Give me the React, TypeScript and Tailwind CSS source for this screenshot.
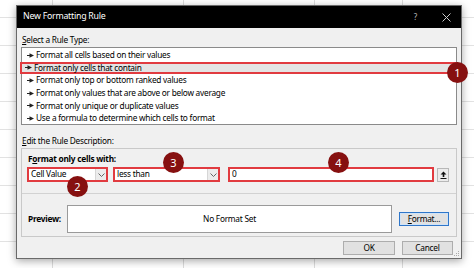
import type { ReactNode } from "react";

const ruleTypes = [
    "Format all cells based on their values",
    "Format only cells that contain",
    "Format only top or bottom ranked values",
    "Format only values that are above or below average",
    "Format only unique or duplicate values",
    "Use a formula to determine which cells to format",
];

const cols = [52, 183, 314, 402];
const rows = [17, 45, 73, 101, 129, 157, 185, 213, 241];

// Sheet grid behind the dialog
function SheetGrid() {
    return (
        <svg className="absolute inset-0" width={474} height={268}>
            {cols.map((x) => (
                <line key={x} x1={x + 0.5} y1={0} x2={x + 0.5} y2={268} stroke="#dcdcdc" />
            ))}
            {rows.map((y) => (
                <line key={y} x1={0} y1={y + 0.5} x2={474} y2={y + 0.5} stroke="#e2e2e2" />
            ))}
        </svg>
    );
}

function Badge({ n, className }: { n: number; className: string }) {
    return (
        <div
            className={`absolute w-[21px] h-[21px] rounded-full bg-[#861010] text-white text-[11px] tracking-normal flex items-center justify-center leading-none ${className}`}
        >
            {n}
        </div>
    );
}

function Chevron() {
    return (
        <svg width="7" height="4" viewBox="0 0 7 4">
            <polyline points="0.5,0.5 3.5,3.5 6.5,0.5" fill="none" stroke="#666" strokeWidth="1" />
        </svg>
    );
}

// little "stem + triangle" marker in front of each rule type
function RuleArrow() {
    return (
        <svg width="7" height="5" viewBox="0 0 7 5" className="mr-[2px] shrink-0">
            <line x1="0" y1="2.5" x2="3" y2="2.5" stroke="#222" strokeWidth="1" />
            <path d="M2.5 0.3 L7 2.5 L2.5 4.7 Z" fill="#222" />
        </svg>
    );
}

function Combo({ label, className }: { label: string; className: string }) {
    return (
        <div className={`h-[15px] border-2 border-[#e13b40] bg-white flex items-center ${className}`}>
            <span className="flex-1 pl-[2px] leading-none">{label}</span>
            <div className="h-full w-[11px] bg-[#ececec] border-l border-[#d6d6d6] flex items-center justify-center">
                <Chevron />
            </div>
        </div>
    );
}

function Button({ children, className }: { children: ReactNode; className: string }) {
    return (
        <div className={`h-[14px] bg-[#e1e1e1] border flex items-center justify-center leading-none ${className}`}>
            {children}
        </div>
    );
}

export default function App() {
    return (
        <div className="relative w-[474px] h-[268px] bg-white overflow-hidden font-['Noto_Sans',sans-serif] text-[#000] text-[8.3px] tracking-[-0.25px]">
            <SheetGrid />

            {/* Dialog window */}
            <div className="absolute left-[16px] top-[5px] w-[446px] h-[254px] flex flex-col border border-[#6a6a6a] shadow-[0_2px_8px_rgba(0,0,0,0.35)]">
                <div className="h-[22px] bg-black text-white flex items-center pl-[6px] pr-[10px] text-[8.8px]">
                    <span className="flex-1">New Formatting Rule</span>
                    <span className="text-[8px] text-[#bbb] mr-[25px]">?</span>
                    <svg width="9" height="9" viewBox="0 0 9 9">
                        <path d="M0.5 0.5 L8.5 8.5 M8.5 0.5 L0.5 8.5" stroke="#ccc" strokeWidth="1" />
                    </svg>
                </div>

                <div className="flex-1 bg-[#f0f0f0] px-[4px] flex flex-col">
                    <div className="pt-[6px] h-[18px] leading-[12px] pl-[1px]">
                        <span className="underline">S</span>elect a Rule Type:
                    </div>

                    <div className="mt-[1px] h-[78px] bg-white border border-[#8a8a8a] pt-[1px]">
                        {ruleTypes.map((t, i) => (
                            <div
                                key={t}
                                className={
                                    i === 1
                                        ? "h-[12.6px] -mx-[2px] border-2 border-[#e13b40] bg-[#e4e4e4] flex items-center pl-[3px]"
                                        : "h-[12.6px] flex items-center pl-[5px]"
                                }
                            >
                                <RuleArrow />
                                <span className="leading-none">{t}</span>
                            </div>
                        ))}
                    </div>

                    <div className="mt-[10px] h-[12px] leading-[12px] pl-[1px]">
                        <span className="underline">E</span>dit the Rule Description:
                    </div>

                    <div className="mt-[1px] h-[89px] border border-[#c9c9c9] flex flex-col">
                        <div className="pt-[4px] pl-[6px] h-[18px] leading-[12px] font-bold">
                            F<span className="underline">o</span>rmat only cells with:
                        </div>
                        <div className="flex items-center pl-[5px]">
                            <Combo label="Cell Value" className="w-[81px]" />
                            <Combo label="less than" className="w-[107px] ml-[5px]" />
                            <div className="ml-[8px] w-[206px] h-[15px] border-2 border-[#e13b40] bg-white flex items-center pl-[2px] leading-none">
                                0
                            </div>
                            <div className="ml-[3px] w-[12px] h-[14px] bg-[#ececec] border border-[#b8b8b8] flex items-center justify-center">
                                <svg width="7" height="8" viewBox="0 0 7 8">
                                    <path d="M3.5 0.5 L6.5 3.5 H4.3 V6 H2.7 V3.5 H0.5 Z" fill="#111" />
                                    <line x1="0.5" y1="7.5" x2="6.5" y2="7.5" stroke="#111" />
                                </svg>
                            </div>
                        </div>
                        <div className="mt-[11px] border-t border-[#d2d2d2]" />
                        <div className="mt-[11px] flex items-center pl-[6px]">
                            <span className="w-[39px] font-bold">Preview:</span>
                            <div className="w-[325px] h-[28px] bg-white border border-[#9a9a9a] flex items-center justify-center">
                                No Format Set
                            </div>
                            <Button className="ml-[7px] w-[50px] border-[#2f76c9] shadow-[inset_0_0_0_1px_#cfe3f7]">
                                <span className="underline">F</span>ormat...
                            </Button>
                        </div>
                    </div>

                    <div className="mt-[4px] flex justify-end pr-[4px]">
                        <Button className="w-[52px] border-[#adadad]">OK</Button>
                        <Button className="ml-[7px] w-[51px] border-[#adadad]">Cancel</Button>
                    </div>
                </div>

                {/* resize grip */}
                <svg className="absolute right-[1px] bottom-[1px]" width="6" height="6" viewBox="0 0 6 6">
                    <rect x="4" y="0" width="1" height="1" fill="#aaa" />
                    <rect x="2" y="2" width="1" height="1" fill="#aaa" />
                    <rect x="4" y="2" width="1" height="1" fill="#aaa" />
                    <rect x="0" y="4" width="1" height="1" fill="#aaa" />
                    <rect x="2" y="4" width="1" height="1" fill="#aaa" />
                    <rect x="4" y="4" width="1" height="1" fill="#aaa" />
                </svg>
            </div>

            <Badge n={1} className="left-[447px] top-[62px]" />
            <Badge n={2} className="left-[67px] top-[176px]" />
            <Badge n={3} className="left-[163px] top-[152px]" />
            <Badge n={4} className="left-[328px] top-[152px]" />
        </div>
    );
}
